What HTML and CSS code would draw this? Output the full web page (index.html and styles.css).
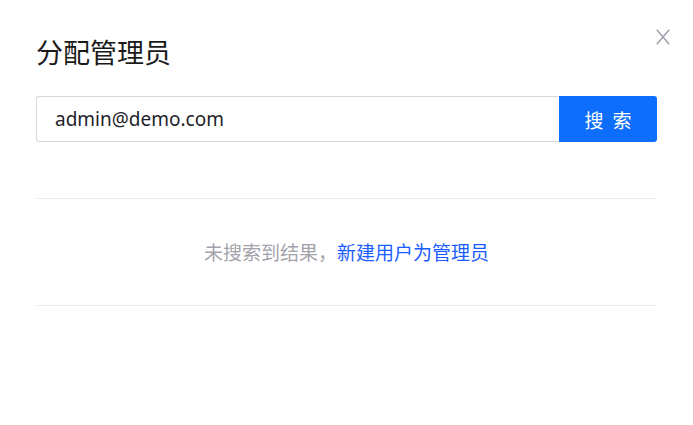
FILE: index.html
```html
<!DOCTYPE html>
<html lang="zh-CN">
<head>
<meta charset="utf-8">
<title>分配管理员</title>
<link rel="stylesheet" href="styles.css">
</head>
<body>
<div class="dialog">
  <button class="close" aria-label="关闭">
    <svg width="14" height="16" viewBox="0 0 14 16"><path d="M0.8 0.8 L13.2 15.2 M13.2 0.8 L0.8 15.2" stroke="#a3a3b0" stroke-width="1.6" fill="none"/></svg>
  </button>
  <h1 class="title">分配管理员</h1>
  <div class="search">
    <input class="search-input" type="text" value="admin@demo.com">
    <button class="search-btn">搜索</button>
  </div>
  <div class="result">
    <span class="empty">未搜索到结果，</span><a class="create" href="#">新建用户为管理员</a>
  </div>
</div>
</body>
</html>
```
FILE: styles.css
```css
html, body {
  margin: 0;
  padding: 0;
  background: #ffffff;
}
.dialog {
  position: relative;
  width: 693px;
  height: 425px;
  box-sizing: border-box;
  padding: 34px 36px 0 36px;
  font-family: "Noto Sans", "Noto Sans CJK SC", sans-serif;
}
.close {
  position: absolute;
  top: 29px;
  right: 23px;
  border: 0;
  background: none;
  padding: 0;
  margin: 0;
  line-height: 0;
  cursor: pointer;
}
.title {
  margin: 0;
  font-family: "Noto Sans CJK SC", sans-serif;
  font-weight: 400;
  font-size: 27px;
  line-height: 36px;
  height: 36px;
  color: #1a1a1a;
}
.search {
  display: flex;
  margin-top: 26px;
  height: 46px;
}
.search-input {
  flex: 1;
  min-width: 0;
  box-sizing: border-box;
  height: 46px;
  margin: 0;
  border: 1px solid #d6d6de;
  border-right: 0;
  border-radius: 3px 0 0 3px;
  padding: 0 0 0 18px;
  font-family: "Noto Sans", sans-serif;
  font-size: 19px;
  color: #1e1e2a;
  outline: none;
}
.search-btn {
  width: 98px;
  height: 46px;
  margin: 0;
  border: 0;
  border-radius: 0 3px 3px 0;
  background: #0d6efd;
  color: #ffffff;
  font-family: "Noto Sans CJK SC", sans-serif;
  font-size: 19px;
  letter-spacing: 9px;
  padding: 0 0 0 9px;
  cursor: pointer;
}
.result {
  margin-top: 56px;
  height: 106px;
  border-top: 1px solid #eeeeee;
  border-bottom: 1px solid #eeeeee;
  display: flex;
  align-items: center;
  justify-content: center;
  font-family: "Noto Sans CJK SC", sans-serif;
  font-size: 19px;
  line-height: 24px;
}
.empty {
  color: #a3a3ab;
}
.create {
  color: #1a5cff;
  text-decoration: none;
}
```
